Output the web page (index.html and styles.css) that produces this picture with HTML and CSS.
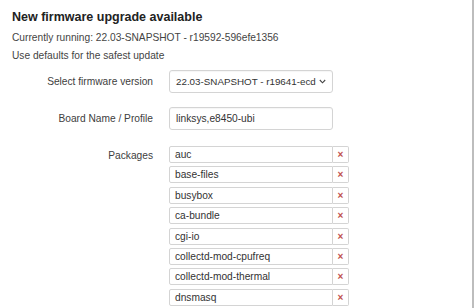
FILE: index.html
```html
<!DOCTYPE html>
<html>
<head>
<meta charset="utf-8">
<link rel="stylesheet" href="styles.css">
</head>
<body>
<div class="page">
  <h3 class="title">New firmware upgrade available</h3>
  <p class="info">Currently running: 22.03-SNAPSHOT - r19592-596efe1356</p>
  <p class="info">Use defaults for the safest update</p>

  <div class="form">
    <div class="row row-select">
      <label class="label">Select firmware version</label>
      <div class="select">
        <span class="select-text">22.03-SNAPSHOT - r19641-ecd</span>
        <svg class="chev" width="7" height="5" viewBox="0 0 7 5"><path d="M0.8 1 L3.5 3.8 L6.2 1" fill="none" stroke="#444" stroke-width="1.1"/></svg>
      </div>
    </div>
    <div class="row row-board">
      <label class="label">Board Name / Profile</label>
      <div class="input">linksys,e8450-ubi</div>
    </div>
    <div class="row row-packages">
      <label class="label label-top">Packages</label>
      <div class="pkgs">
        <div class="pkg"><span class="pkg-name">auc</span><span class="pkg-x">×</span></div>
        <div class="pkg"><span class="pkg-name">base-files</span><span class="pkg-x">×</span></div>
        <div class="pkg"><span class="pkg-name">busybox</span><span class="pkg-x">×</span></div>
        <div class="pkg"><span class="pkg-name">ca-bundle</span><span class="pkg-x">×</span></div>
        <div class="pkg"><span class="pkg-name">cgi-io</span><span class="pkg-x">×</span></div>
        <div class="pkg"><span class="pkg-name">collectd-mod-cpufreq</span><span class="pkg-x">×</span></div>
        <div class="pkg"><span class="pkg-name">collectd-mod-thermal</span><span class="pkg-x">×</span></div>
        <div class="pkg"><span class="pkg-name">dnsmasq</span><span class="pkg-x">×</span></div>
      </div>
    </div>
  </div>
</div>
</body>
</html>
```
FILE: styles.css
```css
html, body {
  margin: 0;
  padding: 0;
  background: #fff;
}
body {
  font-family: "Liberation Sans", Arial, sans-serif;
  color: #404040;
  overflow: hidden;
}
.page {
  box-sizing: border-box;
  width: 474px;
  height: 308px;
  padding: 9px 0 0 12px;
  border-right: 2px solid #bdbdbd;
  overflow: hidden;
}
.title {
  margin: 0 0 4px 0;
  font-size: 12.5px;
  line-height: 16px;
  font-weight: bold;
  color: #222;
}
.info {
  margin: 0;
  font-size: 10.2px;
  line-height: 17.5px;
  color: #444;
}
.form {
  margin-top: 6px;
  display: flex;
  flex-direction: column;
  gap: 14px;
}
.row {
  display: flex;
  align-items: center;
  gap: 16px;
  font-size: 10.2px;
}
.row-packages {
  align-items: flex-start;
  margin-top: 2px;
}
.label {
  width: 141px;
  text-align: right;
  color: #404040;
  flex: none;
}
.label-top {
  line-height: 17px;
  margin-top: 1px;
}
.select, .input {
  box-sizing: border-box;
  width: 164px;
  height: 23px;
  border: 1px solid #d4d4d4;
  border-radius: 3px;
  background: #fff;
  display: flex;
  align-items: center;
  padding: 0 6px;
  color: #333;
  box-shadow: inset 0 1px 1px rgba(0,0,0,0.04);
}
.select {
  gap: 3px;
  padding-right: 5px;
  font-size: 9.8px;
}
.select-text {
  white-space: nowrap;
}
.chev {
  flex: none;
}
.pkgs {
  display: flex;
  flex-direction: column;
  gap: 3.4px;
}
.pkg {
  display: flex;
  height: 17px;
}
.pkg-name {
  box-sizing: border-box;
  width: 164px;
  height: 17px;
  border: 1px solid #d4d4d4;
  border-radius: 2px 0 0 2px;
  padding: 0 5px;
  line-height: 15px;
  color: #333;
}
.pkg-x {
  box-sizing: border-box;
  width: 16px;
  height: 17px;
  border: 1px solid #d4d4d4;
  border-left: none;
  border-radius: 0 2px 2px 0;
  text-align: center;
  line-height: 15px;
  font-size: 10px;
  font-weight: bold;
  color: #c0504d;
}
```
